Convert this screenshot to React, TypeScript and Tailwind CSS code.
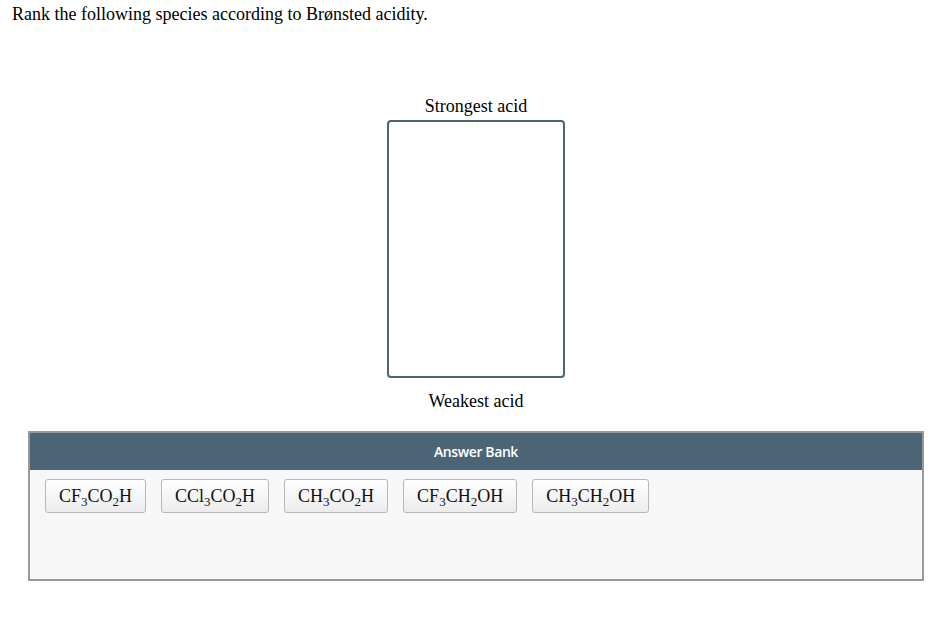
import React from "react";

type Species = { parts: { t: string; sub?: boolean }[] };

// formula pieces, subscripts marked
const species: Species[] = [
  { parts: [{ t: "CF" }, { t: "3", sub: true }, { t: "CO" }, { t: "2", sub: true }, { t: "H" }] },
  { parts: [{ t: "CCl" }, { t: "3", sub: true }, { t: "CO" }, { t: "2", sub: true }, { t: "H" }] },
  { parts: [{ t: "CH" }, { t: "3", sub: true }, { t: "CO" }, { t: "2", sub: true }, { t: "H" }] },
  { parts: [{ t: "CF" }, { t: "3", sub: true }, { t: "CH" }, { t: "2", sub: true }, { t: "OH" }] },
  { parts: [{ t: "CH" }, { t: "3", sub: true }, { t: "CH" }, { t: "2", sub: true }, { t: "OH" }] },
];

const Chip = ({ item }: { item: Species }) => (
  <div className="h-[34px] px-[13px] flex items-center rounded-[3px] border border-[#b8b8b8] bg-gradient-to-b from-white to-[#ececec] text-[18px] text-[#111] leading-none">
    {item.parts.map((p, i) =>
      p.sub ? (
        <span key={i} className="text-[13px] relative top-[5px]">
          {p.t}
        </span>
      ) : (
        <span key={i}>{p.t}</span>
      )
    )}
  </div>
);

export default function App() {
  return (
    <div className="w-[940px] h-[618px] bg-white text-black font-['Liberation_Serif','Times_New_Roman',serif]">
      <p className="pl-[12px] pt-[4px] text-[18px] leading-[20px]">
        Rank the following species according to Brønsted acidity.
      </p>

      <div className="ml-[28px] w-[896px]">
        {/* ranking target */}
        <div className="flex flex-col items-center pt-[72px]">
          <div className="text-[18px] leading-[20px]">Strongest acid</div>
          <div className="mt-[4px] w-[178px] h-[258px] border-2 border-[#4d6477] rounded-[4px] bg-white" />
          <div className="mt-[13px] text-[18px] leading-[20px]">Weakest acid</div>
        </div>

        {/* answer bank */}
        <div className="mt-[20px] h-[150px] border-2 border-[#999] bg-[#f7f7f7]">
          <div className="h-[37px] bg-[#4b6577] flex items-center justify-center text-white text-[14px] font-semibold font-['Open_Sans','Liberation_Sans',sans-serif] tracking-[-0.4px]">
            Answer Bank
          </div>
          <div className="flex gap-[15px] pl-[15px] pt-[9px]">
            {species.map((s, i) => (
              <Chip key={i} item={s} />
            ))}
          </div>
        </div>
      </div>
    </div>
  );
}
